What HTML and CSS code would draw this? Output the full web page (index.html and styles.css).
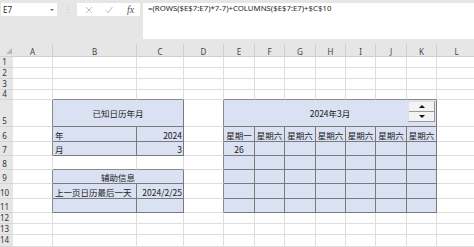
FILE: index.html
```html
<!DOCTYPE html>
<html lang="zh-CN">
<head>
<meta charset="utf-8">
<title>日历</title>
<link rel="stylesheet" href="styles.css">
</head>
<body>
<div class="app">
  <div class="toolbar">
    <div class="namebox"><span>E7</span><span class="caret"></span></div>
    <div class="grip">⋮</div>
    <div class="fxbox">
      <svg class="ico" width="8" height="8" viewBox="0 0 8 8"><path d="M1 1L7 7M7 1L1 7" stroke="#b4b4b4" stroke-width="0.9" fill="none"/></svg>
      <svg class="ico" width="8" height="8" viewBox="0 0 8 8"><path d="M0.8 4.4L3 6.8L7.4 1" stroke="#b4b4b4" stroke-width="0.9" fill="none"/></svg>
      <span class="fx">fx</span>
    </div>
    <div class="formula">=(ROWS($E$7:E7)*7-7)+COLUMNS($E$7:E7)+$C$10</div>
  </div>

  <div class="sheet">
    <div class="corner"><span class="tri"></span></div>
    <div class="ch">A</div><div class="ch">B</div><div class="ch">C</div><div class="ch">D</div>
    <div class="ch">E</div><div class="ch">F</div><div class="ch">G</div><div class="ch">H</div>
    <div class="ch">I</div><div class="ch">J</div><div class="ch">K</div><div class="ch">L</div>

    <div class="rh">1</div>
    <div class="c"></div><div class="c"></div><div class="c"></div><div class="c"></div><div class="c"></div><div class="c"></div>
    <div class="c"></div><div class="c"></div><div class="c"></div><div class="c"></div><div class="c"></div><div class="c"></div>

    <div class="rh">2</div>
    <div class="c"></div><div class="c"></div><div class="c"></div><div class="c"></div><div class="c"></div><div class="c"></div>
    <div class="c"></div><div class="c"></div><div class="c"></div><div class="c"></div><div class="c"></div><div class="c"></div>

    <div class="rh">3</div>
    <div class="c"></div><div class="c"></div><div class="c"></div><div class="c"></div><div class="c"></div><div class="c"></div>
    <div class="c"></div><div class="c"></div><div class="c"></div><div class="c"></div><div class="c"></div><div class="c"></div>

    <div class="rh">4</div>
    <div class="c"></div><div class="c bb"></div><div class="c bb"></div><div class="c"></div>
    <div class="c bb"></div><div class="c bb"></div><div class="c bb"></div><div class="c bb"></div>
    <div class="c bb"></div><div class="c bb"></div><div class="c bb"></div><div class="c"></div>

    <div class="rh">5</div>
    <div class="c br"></div>
    <div class="c t mid span2">已知日历年月</div>
    <div class="c br"></div>
    <div class="c t mid span7">2024年3月
      <div class="spin">
        <div class="sbtn"><span class="up"></span></div>
        <div class="sbtn"><span class="down"></span></div>
      </div>
    </div>
    <div class="c"></div>

    <div class="rh">6</div>
    <div class="c br"></div>
    <div class="c t">年</div><div class="c t num">2024</div>
    <div class="c br"></div>
    <div class="c t ctr">星期一</div><div class="c t ctr">星期六</div><div class="c t ctr">星期六</div><div class="c t ctr">星期六</div>
    <div class="c t ctr">星期六</div><div class="c t ctr">星期六</div><div class="c t ctr">星期六</div>
    <div class="c"></div>

    <div class="rh">7</div>
    <div class="c br"></div>
    <div class="c t">月</div><div class="c t num">3</div>
    <div class="c br"></div>
    <div class="c t ctr">26</div><div class="c t"></div><div class="c t"></div><div class="c t"></div>
    <div class="c t"></div><div class="c t"></div><div class="c t"></div>
    <div class="c"></div>

    <div class="rh">8</div>
    <div class="c"></div>
    <div class="c bb"></div><div class="c bb"></div>
    <div class="c br"></div>
    <div class="c t"></div><div class="c t"></div><div class="c t"></div><div class="c t"></div>
    <div class="c t"></div><div class="c t"></div><div class="c t"></div>
    <div class="c"></div>

    <div class="rh">9</div>
    <div class="c br"></div>
    <div class="c t ctr span2">辅助信息</div>
    <div class="c br"></div>
    <div class="c t"></div><div class="c t"></div><div class="c t"></div><div class="c t"></div>
    <div class="c t"></div><div class="c t"></div><div class="c t"></div>
    <div class="c"></div>

    <div class="rh">10</div>
    <div class="c br"></div>
    <div class="c t">上一页日历最后一天</div><div class="c t num">2024/2/25</div>
    <div class="c br"></div>
    <div class="c t"></div><div class="c t"></div><div class="c t"></div><div class="c t"></div>
    <div class="c t"></div><div class="c t"></div><div class="c t"></div>
    <div class="c"></div>

    <div class="rh">11</div>
    <div class="c br"></div>
    <div class="c t"></div><div class="c t"></div>
    <div class="c br"></div>
    <div class="c t"></div><div class="c t"></div><div class="c t"></div><div class="c t"></div>
    <div class="c t"></div><div class="c t"></div><div class="c t"></div>
    <div class="c"></div>

    <div class="rh">12</div>
    <div class="c"></div><div class="c"></div><div class="c"></div><div class="c"></div><div class="c"></div><div class="c"></div>
    <div class="c"></div><div class="c"></div><div class="c"></div><div class="c"></div><div class="c"></div><div class="c"></div>

    <div class="rh">13</div>
    <div class="c"></div><div class="c"></div><div class="c"></div><div class="c"></div><div class="c"></div><div class="c"></div>
    <div class="c"></div><div class="c"></div><div class="c"></div><div class="c"></div><div class="c"></div><div class="c"></div>

    <div class="rh last">14</div>
    <div class="c"></div><div class="c"></div><div class="c"></div><div class="c"></div><div class="c"></div><div class="c"></div>
    <div class="c"></div><div class="c"></div><div class="c"></div><div class="c"></div><div class="c"></div><div class="c"></div>
  </div>
</div>
</body>
</html>
```

FILE: styles.css
```css
* {
  box-sizing: border-box;
  margin: 0;
  padding: 0;
}

html, body {
  width: 474px;
  height: 247px;
  overflow: hidden;
  background: #e6e6e6;
}

.app {
  width: 474px;
  height: 247px;
  overflow: hidden;
}

/* ---------- formula bar ---------- */
.toolbar {
  height: 44px;
  display: flex;
  align-items: flex-start;
  padding: 3px 0 0 1px;
  font-family: "Noto Sans", "Liberation Sans", sans-serif;
  font-size: 8px;
  color: #262626;
}

.namebox {
  width: 56px;
  height: 13px;
  background: #fff;
  display: flex;
  align-items: center;
  justify-content: space-between;
  padding: 0 3px 0 2px;
}

.caret {
  width: 0;
  height: 0;
  border-left: 2px solid transparent;
  border-right: 2px solid transparent;
  border-top: 2px solid #666;
}

.grip {
  width: 20px;
  height: 13px;
  line-height: 13px;
  text-align: center;
  color: #c4c4c4;
  font-size: 9px;
}

.fxbox {
  width: 63px;
  height: 13px;
  background: #fff;
  display: flex;
  align-items: center;
  padding-left: 8px;
  gap: 12px;
}

.fx {
  font-family: "Liberation Serif", serif;
  font-style: italic;
  font-size: 10px;
  color: #555;
  margin-left: 2px;
}

.formula {
  flex: 1;
  height: 36px;
  margin-left: 3px;
  background: #fff;
  padding: 0 5px;
  white-space: nowrap;
  font-size: 7.8px;
}

/* ---------- sheet ---------- */
.sheet {
  display: grid;
  grid-template-columns: 13px 40px 84px 47px 40px 31px 30px 31px 30px 30px 31px 30px 40px;
  grid-template-rows: 13px 11px 11px 11px 10px 27px 15px 14px 14px 14px 15px 14px 11px 11px 12px;
  background: #fff;
  font-family: "Noto Sans CJK SC", "Noto Sans", sans-serif;
  font-size: 8.5px;
  color: #1a1a1a;
}

.corner {
  background: #e6e6e6;
  border-bottom: 1px solid #d0d0d0;
  position: relative;
}

.tri {
  position: absolute;
  right: 1px;
  bottom: 2px;
  width: 0;
  height: 0;
  border-left: 6px solid transparent;
  border-bottom: 6px solid #b8b8b8;
}

.ch {
  background: #e6e6e6;
  border-right: 1px solid #cfcfcf;
  border-bottom: 1px solid #d0d0d0;
  font-family: "Noto Sans", sans-serif;
  font-size: 8px;
  color: #444;
  text-align: center;
  line-height: 13px;
  padding-top: 1px;
}

.rh {
  background: #e6e6e6;
  border-bottom: 1px solid #d6d6d6;
  font-family: "Noto Sans", sans-serif;
  font-size: 8px;
  color: #333;
  display: flex;
  align-items: flex-end;
  justify-content: center;
  padding-right: 4px;
  line-height: 10px;
}

.rh.last {
  padding-bottom: 1px;
}

.c {
  border-right: 1px solid #dedede;
  border-bottom: 1px solid #dedede;
  display: flex;
  align-items: flex-end;
  padding: 0 2px;
  white-space: nowrap;
  overflow: hidden;
}

.bb {
  border-bottom-color: #8a8a8a;
}

.br {
  border-right-color: #8a8a8a;
}

.t {
  background: #d9e1f2;
  border-right-color: #7a7a7a;
  border-bottom-color: #7a7a7a;
}

.num {
  justify-content: flex-end;
  padding-right: 1px;
}

.ctr {
  justify-content: center;
  padding: 0;
}

.mid {
  align-items: center;
  justify-content: center;
}

.span2 {
  grid-column: span 2;
}

.span7 {
  grid-column: span 7;
  position: relative;
  overflow: visible;
}

/* ---------- spin button (overlay control) ---------- */
.spin {
  position: absolute;
  top: 1px;
  right: 1px;
  width: 27px;
  height: 21px;
  display: flex;
  flex-direction: column;
  border: 1px solid #9a9a9a;
  border-top-color: #e0e0e0;
  border-left-color: #e0e0e0;
  background: #9a9a9a;
  gap: 1px;
}

.sbtn {
  flex: 1;
  background: #f3f3f3;
  display: flex;
  align-items: center;
  justify-content: center;
}

.up {
  width: 0;
  height: 0;
  border-left: 3px solid transparent;
  border-right: 3px solid transparent;
  border-bottom: 3px solid #111;
}

.down {
  width: 0;
  height: 0;
  border-left: 3px solid transparent;
  border-right: 3px solid transparent;
  border-top: 3px solid #111;
}
```
